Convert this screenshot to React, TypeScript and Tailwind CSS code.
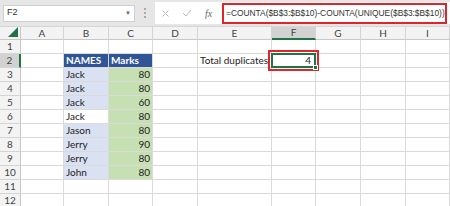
import React from 'react';

const COLS = [
  { key: 'A', w: 'w-[43px]' },
  { key: 'B', w: 'w-[45px]' },
  { key: 'C', w: 'w-[44px]' },
  { key: 'D', w: 'w-[45px]' },
  { key: 'E', w: 'w-[74px]' },
  { key: 'F', w: 'w-[44px]' },
  { key: 'G', w: 'w-[45px]' },
  { key: 'H', w: 'w-[45px]' },
  { key: 'I', w: 'flex-1' },
];

const DATA: [string, string][] = [
  ['Jack', '80'],
  ['Jack', '80'],
  ['Jack', '60'],
  ['Jack', '80'],
  ['Jason', '80'],
  ['Jerry', '90'],
  ['Jerry', '80'],
  ['John', '80'],
];

const font = { fontFamily: 'Lato, "Liberation Sans", sans-serif' };

function Cell({ row, col, w }: { row: number; col: string; w: string }) {
  const base = `${w} shrink-0 h-full border-r border-b border-[#dadada] flex items-center px-[2px] text-[10px] text-[#222]`;

  if (col === 'B' && row === 2)
    return <div className={`${base} bg-[#2f5597] border-[#2f5597] text-white font-bold`}>NAMES</div>;
  if (col === 'C' && row === 2)
    return <div className={`${base} bg-[#2f5597] border-[#2f5597] text-white font-bold`}>Marks</div>;
  if (row >= 3 && row <= 10 && col === 'B') {
    const bg = row === 6 ? 'bg-white' : 'bg-[#d9e1f2]';
    return <div className={`${base} ${bg} border-[#b4c6e7]`}>{DATA[row - 3][0]}</div>;
  }
  if (row >= 3 && row <= 10 && col === 'C')
    return (
      <div className={`${base} bg-[#c6e0b4] border-[#a9d08e] justify-end`}>{DATA[row - 3][1]}</div>
    );
  if (col === 'E' && row === 2) return <div className={`${base} whitespace-nowrap`}>Total duplicates</div>;
  if (col === 'F' && row === 2)
    return (
      <div className={`${w} shrink-0 h-full border-r border-b border-[#dadada] relative`}>
        <div className="absolute -left-[4px] -top-[4px] -right-[4px] -bottom-[4px] border-2 border-[#e0242b] z-10" />
        <div className="absolute -left-px -top-px -right-px -bottom-px border-2 border-[#217346] flex items-center justify-end pr-[3px] text-[10px] text-[#222] z-20 bg-white">
          4
        </div>
        <div className="absolute -right-[3px] -bottom-[3px] w-[5px] h-[5px] bg-[#217346] border border-white z-30" />
      </div>
    );
  return <div className={base} />;
}

export default function App() {
  const rows = Array.from({ length: 12 }, (_, i) => i + 1);
  return (
    <div className="w-[450px] h-[206px] overflow-hidden bg-white flex flex-col" style={font}>
      {/* formula bar */}
      <div className="h-[27px] shrink-0 bg-[#e6e6e6] border-b border-[#d6d6d6] flex items-center pl-[3px]">
        <div className="w-[132px] shrink-0 h-[17px] bg-white border border-[#d0d0d0] flex items-center px-[3px] text-[9px] text-[#333]" style={{ fontFamily: '"Liberation Sans", sans-serif' }}>
          <span className="flex-1">F2</span>
          <span className="text-[6px] text-[#666]">▼</span>
        </div>
        <div className="w-[20px] shrink-0 flex flex-col items-center gap-[2px]">
          <span className="w-[2px] h-[2px] bg-[#aaa]" />
          <span className="w-[2px] h-[2px] bg-[#aaa]" />
          <span className="w-[2px] h-[2px] bg-[#aaa]" />
        </div>
        <div className="flex-1 min-w-0 h-[22px] bg-white flex items-center">
          <div className="w-[67px] shrink-0 flex items-center pl-[7px] gap-[13px]">
            <svg width="7" height="7" viewBox="0 0 7 7"><path d="M0.5 0.5L6.5 6.5M6.5 0.5L0.5 6.5" stroke="#bbb" strokeWidth="1" /></svg>
            <svg width="10" height="8" viewBox="0 0 10 8"><path d="M1 4L4 7L9 1" stroke="#bbb" strokeWidth="1" fill="none" /></svg>
            <span className="italic text-[#666] text-[10px]" style={{ fontFamily: '"Liberation Serif", serif' }}>fx</span>
          </div>
          <div className="flex-1 min-w-0 h-[21px] border-2 border-[#e0242b] flex items-center pl-[2px] mr-[3px] text-[8.4px] text-[#333] whitespace-nowrap overflow-hidden" style={{ fontFamily: '"Liberation Sans", sans-serif' }}>
            =COUNTA($B$3:$B$10)-COUNTA(UNIQUE($B$3:$B$10))
          </div>
        </div>
      </div>
      {/* column headers */}
      <div className="h-[13px] shrink-0 flex bg-[#f3f3f3] text-[10px] text-[#444]">
        <div className="w-[21px] shrink-0 border-r border-b border-[#c8c8c8] relative">
          <svg className="absolute right-[2px] bottom-[2px]" width="10" height="10" viewBox="0 0 10 10"><path d="M10 0L10 10L0 10Z" fill="#217346" /></svg>
        </div>
        {COLS.map((c) => (
          <div
            key={c.key}
            className={`${c.w} shrink-0 flex items-center justify-center border-r border-[#d4d4d4] ${
              c.key === 'F' ? 'bg-[#d2d2d2] border-b-2 border-b-[#217346]' : 'border-b border-b-[#c8c8c8]'
            }`}
          >
            {c.key}
          </div>
        ))}
      </div>
      {rows.map((r) => (
        <div key={r} className="h-[14px] shrink-0 flex">
          <div
            className={`w-[21px] shrink-0 h-full flex items-center justify-center text-[10px] text-[#444] border-b border-[#d4d4d4] ${
              r === 2 ? 'bg-[#d2d2d2] border-r-2 border-r-[#217346]' : 'bg-[#f3f3f3] border-r border-r-[#c8c8c8]'
            }`}
          >
            {r}
          </div>
          {COLS.map((c) => (
            <Cell key={c.key} row={r} col={c.key} w={c.w} />
          ))}
        </div>
      ))}
    </div>
  );
}
